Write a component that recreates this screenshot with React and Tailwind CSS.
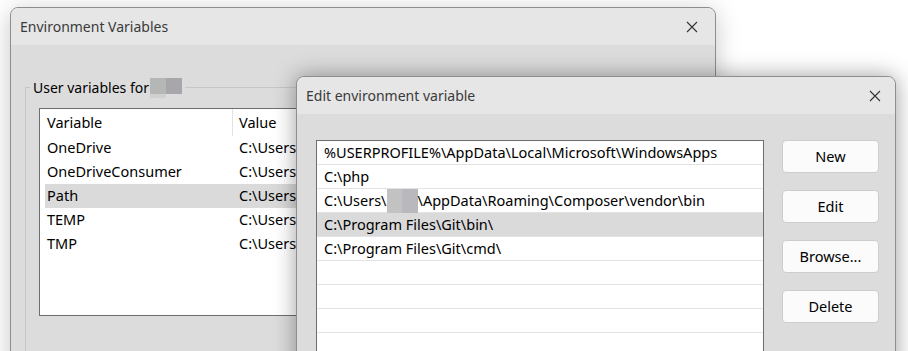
import React from "react";

const FONT = { fontFamily: '"Noto Sans", "Open Sans", sans-serif' };

function CloseX() {
  return (
    <svg width="12" height="12" viewBox="0 0 12 12" className="block">
      <path d="M1 1 L11 11 M11 1 L1 11" stroke="#333" strokeWidth="1.1" fill="none" />
    </svg>
  );
}

function BackWindow() {
  const rows = ["OneDrive", "OneDriveConsumer", "Path", "TEMP", "TMP"];
  return (
    <div className="absolute left-[10px] top-[7px] w-[706px] h-[380px] rounded-t-[8px] border border-[#8e8e8e] bg-[#dcdcdc] shadow-[0_4px_24px_rgba(0,0,0,0.22)] overflow-hidden">
      <div className="h-[37px] bg-[#e6e6e6] flex items-center justify-between pl-[9px] pr-[17px]">
        <span className="text-[14px] text-[#3a3a3a]">Environment Variables</span>
        <CloseX />
      </div>
      <div className="pl-[14px] pt-[31px]">
        <fieldset className="border border-[#c6c6c6] w-[720px] h-[300px] pl-[13px] pr-0 m-0">
          <legend className="ml-[-9px] pl-[3px] pr-[3px] flex items-center h-[22px]">
            <span className="text-[14px] text-black">User variables for</span>
            <span className="flex h-[20px] mt-[1px] ml-[1px]">
              <span className="flex flex-col w-[16px]">
                <span className="h-[16px] bg-[#b5b7b6]" />
                <span className="h-[4px] bg-[#d0d0d0]" />
              </span>
              <span className="w-[16px] h-[16px] bg-[#a8a6aa]" />
            </span>
          </legend>
          <div className="mt-[10px] w-[700px] h-[208px] bg-white border border-[#6e6e6e] text-[14.5px] text-black">
            <div className="h-[27px] flex items-center">
              <div className="w-[193px] h-full flex items-center pl-[7px] border-r border-[#e3e3e3]">Variable</div>
              <div className="pl-[6px]">Value</div>
            </div>
            {rows.map((r) => (
              <div
                key={r}
                className={
                  "h-[24px] ml-[5px] flex items-center " + (r === "Path" ? "bg-[#dadada]" : "")
                }
              >
                <div className="w-[188px] pl-[2px]">{r}</div>
                <div className="pl-[6px]">C:\Users\</div>
              </div>
            ))}
          </div>
        </fieldset>
      </div>
    </div>
  );
}

function Btn({ children }) {
  return (
    <div className="w-[97px] h-[33px] rounded-[4px] border border-[#cdcdcd] bg-[#fbfbfb] flex items-center justify-center text-[14.5px] text-black">
      {children}
    </div>
  );
}

function FrontWindow() {
  const paths = [
    "%USERPROFILE%\\AppData\\Local\\Microsoft\\WindowsApps",
    "C:\\php",
    "users",
    "C:\\Program Files\\Git\\bin\\",
    "C:\\Program Files\\Git\\cmd\\",
    "",
    "",
    "",
    "",
  ];
  return (
    <div className="absolute left-[296px] top-[76px] w-[600px] h-[300px] rounded-t-[8px] border border-[#8e8e8e] bg-[#dcdcdc] shadow-[0_0_22px_rgba(0,0,0,0.38)] overflow-hidden">
      <div className="h-[37px] bg-[#e6e6e6] flex items-center justify-between pl-[9px] pr-[14px]">
        <span className="text-[14px] text-[#3a3a3a]">Edit environment variable</span>
        <CloseX />
      </div>
      <div className="flex pl-[19px] pt-[25px] gap-[18px]">
        <div className="w-[448px] h-[240px] mt-[1px] bg-white border border-[#6e6e6e] text-[14.5px] text-black">
          {paths.map((p, i) => (
            <div
              key={i}
              className={
                "h-[24px] flex items-center pl-[7px] border-b border-[#e3e3e3] " +
                (i === 3 ? "bg-[#dadada]" : "")
              }
            >
              {p === "users" ? (
                <>
                  <span>C:\Users\</span>
                  <span className="w-[31px] h-[24px] flex">
                    <span className="w-[15px] bg-[#c2c2c2]" />
                    <span className="w-[16px] bg-[#b9b9bd]" />
                  </span>
                  <span>\AppData\Roaming\Composer\vendor\bin</span>
                </>
              ) : (
                p
              )}
            </div>
          ))}
        </div>
        <div className="flex flex-col gap-[17px] pt-[1px]">
          <Btn>New</Btn>
          <Btn>Edit</Btn>
          <Btn>Browse...</Btn>
          <Btn>Delete</Btn>
        </div>
      </div>
    </div>
  );
}

export default function App() {
  return (
    <div className="relative w-[908px] h-[351px] bg-white overflow-hidden" style={FONT}>
      <BackWindow />
      <FrontWindow />
    </div>
  );
}
